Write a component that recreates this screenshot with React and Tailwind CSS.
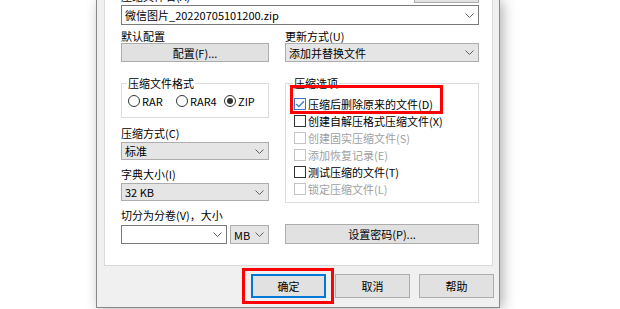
import React from 'react';

// WinRAR "压缩文件名和参数" dialog, General tab (bottom part)

function Chevron() {
  return (
    <svg width="9" height="5" viewBox="0 0 9 5" className="shrink-0">
      <polyline points="0.5,0.5 4.5,4.5 8.5,0.5" fill="none" stroke="#5f5f5f" strokeWidth="1" />
    </svg>
  );
}

function Combo({ value, white, className }) {
  const look = white ? 'bg-white border-[#7a7a7a]' : 'bg-[#e5e5e5] border-[#adadad]';
  return (
    <div className={`flex items-center justify-between border pl-[3px] pr-[4px] ${look} ${className}`}>
      <span className="leading-[14px] whitespace-nowrap">{value}</span>
      <Chevron />
    </div>
  );
}

function Btn({ children, className }) {
  return (
    <div className={`flex items-center justify-center bg-[#e1e1e1] leading-[14px] ${className}`}>
      {children}
    </div>
  );
}

function Radio({ label, checked }) {
  return (
    <div className="w-[48px] shrink-0 flex items-center gap-[2px]">
      <div className="w-[12px] h-[12px] rounded-full border border-[#333333] bg-white flex items-center justify-center shrink-0">
        {checked && <div className="w-[6px] h-[6px] rounded-full bg-[#333333]" />}
      </div>
      <span className="leading-[14px] whitespace-nowrap">{label}</span>
    </div>
  );
}

function Check({ label, checked, disabled, highlight }) {
  const box = checked
    ? 'border-[#3a76c4]'
    : disabled
      ? 'border-[#c4c4c4]'
      : 'border-[#333333]';
  return (
    <div className="relative h-[17px] flex items-center gap-[2px]">
      <div className={`w-[12px] h-[12px] border bg-white flex items-center justify-center shrink-0 ${box}`}>
        {checked && (
          <svg width="10" height="10" viewBox="0 0 10 10">
            <polyline points="1.2,5 3.8,7.6 8.8,2.2" fill="none" stroke="#3a76c4" strokeWidth="1.3" />
          </svg>
        )}
      </div>
      <span className={`leading-[14px] whitespace-nowrap ${disabled ? 'text-[#a0a0a0]' : 'text-black'}`}>
        {label}
      </span>
      {highlight && (
        <div className="absolute left-[-4px] top-[-10px] w-[153px] h-[29px] border-[3px] border-[#ff0000]" />
      )}
    </div>
  );
}

const options = [
  { label: '压缩后删除原来的文件(D)', checked: true, highlight: true },
  { label: '创建自解压格式压缩文件(X)' },
  { label: '创建固实压缩文件(S)', disabled: true },
  { label: '添加恢复记录(E)', disabled: true },
  { label: '测试压缩的文件(T)' },
  { label: '锁定压缩文件(L)', disabled: true },
];

export default function App() {
  return (
    <div className="w-[620px] h-[309px] bg-white overflow-hidden flex text-[11px] text-black font-['Noto_Sans_CJK_SC','Noto_Sans',sans-serif]">
      <div className="ml-[96px] w-[404px] h-[308px] shrink-0 flex flex-col bg-[#f0f0f0] border-x border-b border-[#888888] shadow-[3px_1px_12px_rgba(0,0,0,0.3)]">
        {/* tab page */}
        <div className="-mt-[40px] ml-[7px] w-[389px] h-[306px] shrink-0 flex flex-col bg-white border border-[#d9d9d9] pt-[19px] pl-[16px] pr-[13px]">
          <div className="h-[23px] shrink-0 flex justify-between items-end">
            <span className="leading-[14px]">压缩文件名(A)</span>
            <Btn className="w-[65px] h-[23px] border border-[#adadad]">浏览(B)...</Btn>
          </div>
          <Combo white value="微信图片_20220705101200.zip" className="mt-[2px] h-[20px] shrink-0" />

          <div className="mt-[4px] flex gap-[16px] shrink-0">
            <div className="w-[148px] flex flex-col">
              <span className="leading-[14px]">默认配置</span>
              <Btn className="h-[19px] border border-[#adadad]">配置(F)...</Btn>
            </div>
            <div className="flex-1 flex flex-col">
              <span className="leading-[14px]">更新方式(U)</span>
              <Combo value="添加并替换文件" className="h-[19px]" />
            </div>
          </div>

          <div className="mt-[14px] flex gap-[16px] shrink-0">
            {/* left column */}
            <div className="w-[148px] flex flex-col">
              <fieldset className="border border-[#dcdcdc] px-[6px] pt-[4px] pb-[9px] min-w-0">
                <legend className="-ml-[1px] px-[1px] leading-[14px]">压缩文件格式</legend>
                <div className="h-[14px] flex items-center">
                  <Radio label="RAR" />
                  <Radio label="RAR4" />
                  <Radio label="ZIP" checked />
                </div>
              </fieldset>
              <span className="mt-[8px] leading-[14px]">压缩方式(C)</span>
              <Combo value="标准" className="mt-[2px] h-[18px]" />
              <span className="mt-[7px] leading-[14px]">字典大小(I)</span>
              <Combo value="32 KB" className="mt-[2px] h-[18px]" />
              <span className="mt-[7px] leading-[14px]">切分为分卷(V)，大小</span>
              <div className="mt-[3px] flex gap-[3px]">
                <Combo white value="" className="w-[106px] h-[19px]" />
                <Combo value="MB" className="w-[39px] h-[19px] pl-[2px]" />
              </div>
            </div>

            {/* right column */}
            <div className="flex-1 flex flex-col">
              <fieldset className="border border-[#dcdcdc] px-[8px] pt-[5px] pb-[5px] min-w-0">
                <legend className="-ml-[1px] px-[1px] leading-[14px]">压缩选项</legend>
                {options.map((o) => (
                  <Check key={o.label} {...o} />
                ))}
              </fieldset>
              <Btn className="mt-[21px] h-[20px] border border-[#adadad]">设置密码(P)...</Btn>
            </div>
          </div>
        </div>

        {/* dialog buttons */}
        <div className="mt-[8px] h-[24px] shrink-0 flex justify-end gap-[9px] pr-[5px]">
          <div className="relative">
            <Btn className="w-[75px] h-[24px] border-2 border-[#0078d7]">确定</Btn>
            <div className="absolute -left-[9px] -right-[8px] -top-[6px] -bottom-[6px] border-[3px] border-[#ff0000]" />
          </div>
          <Btn className="w-[75px] h-[24px] border border-[#adadad]">取消</Btn>
          <Btn className="w-[75px] h-[24px] border border-[#adadad]">帮助</Btn>
        </div>
      </div>
    </div>
  );
}
